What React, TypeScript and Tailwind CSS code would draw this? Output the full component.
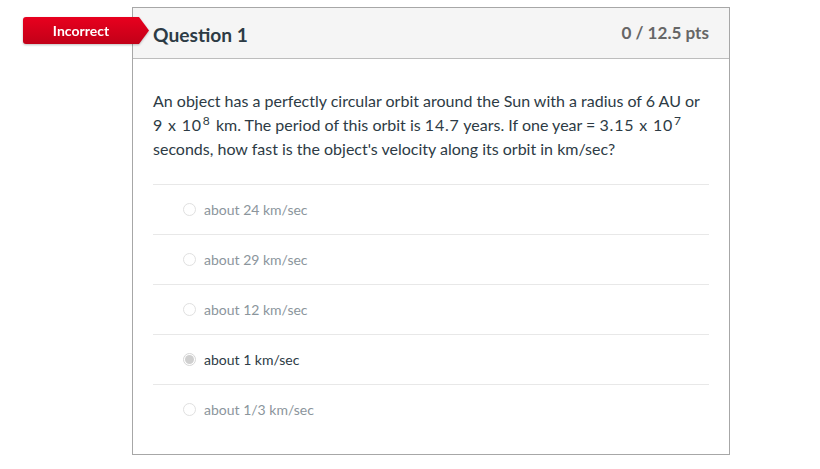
import React from "react";

const answers = [
  { label: "about 24 km/sec", selected: false },
  { label: "about 29 km/sec", selected: false },
  { label: "about 12 km/sec", selected: false },
  { label: "about 1 km/sec", selected: true },
  { label: "about 1/3 km/sec", selected: false },
];

export default function App() {
  return (
    <div className="w-[820px] h-[469px] bg-white pt-[7px] pl-[132px] font-['Lato','Open_Sans',sans-serif] text-[#2d3b45]">
      <div className="relative w-[598px] border border-[#a7a7a7]">
        <div className="absolute left-[-110px] top-[9px] flex h-[27px] drop-shadow-[0_1px_1px_rgba(0,0,0,0.25)]">
          <div className="flex w-[116px] items-center justify-center rounded-l-[3px] bg-gradient-to-b from-[#e8001e] to-[#c20018] text-[14px] font-bold text-white">
            Incorrect
          </div>
          <div className="w-[10px] bg-gradient-to-b from-[#e8001e] to-[#c20018] [clip-path:polygon(0_0,100%_50%,0_100%)]" />
        </div>
        <div className="flex h-[51px] items-center justify-between border-b border-[#bdbdbd] bg-[#f5f5f5] px-[20px]">
          <div className="mt-[5px] text-[19.2px] font-bold text-[#2d3b45]">Question 1</div>
          <div className="text-[17.1px] font-bold text-[#666666]">0 / 12.5 pts</div>
        </div>
        <div className="px-[20px] pt-[30px] pb-[20px]">
          <p className="text-[16px] leading-[24px] text-[#2d3b45]">
            An object has a perfectly circular orbit around the Sun with a radius of 6 AU or{" "}
            <span className="whitespace-nowrap">
              <span className="tracking-[0.8px]">9 x 10</span>
              <sup className="ml-[1px] mr-[2px] text-[12px] leading-none">8</sup>
            </span>{" "}
            km. The period of this orbit is <span className="tracking-[0.8px]">14.7</span> years. If one year ={" "}
            <span className="whitespace-nowrap">
              <span className="tracking-[0.8px]">3.15 x 10</span>
              <sup className="ml-[1px] mr-[2px] text-[12px] leading-none">7</sup>
            </span>{" "}
            seconds, how fast is the object's velocity along its orbit in km/sec?
          </p>
          <div className="mt-[23px]">
            {answers.map((a) => (
              <div
                key={a.label}
                className="flex h-[50px] items-center border-t border-[#e8e8e8] pl-[30px]"
              >
                <span
                  className={
                    a.selected
                      ? "flex h-[13px] w-[13px] items-center justify-center rounded-full border border-[#d6d6d6] bg-white"
                      : "h-[13px] w-[13px] rounded-full border border-[#e0e0e0] bg-white"
                  }
                >
                  {a.selected && <span className="h-[9px] w-[9px] rounded-full bg-[#cfcfcf]" />}
                </span>
                <span
                  className={
                    a.selected
                      ? "ml-[8px] text-[14px] text-[#2d3b45]"
                      : "ml-[8px] text-[14px] text-[#8b959c]"
                  }
                >
                  {a.label}
                </span>
              </div>
            ))}
          </div>
        </div>
      </div>
    </div>
  );
}
